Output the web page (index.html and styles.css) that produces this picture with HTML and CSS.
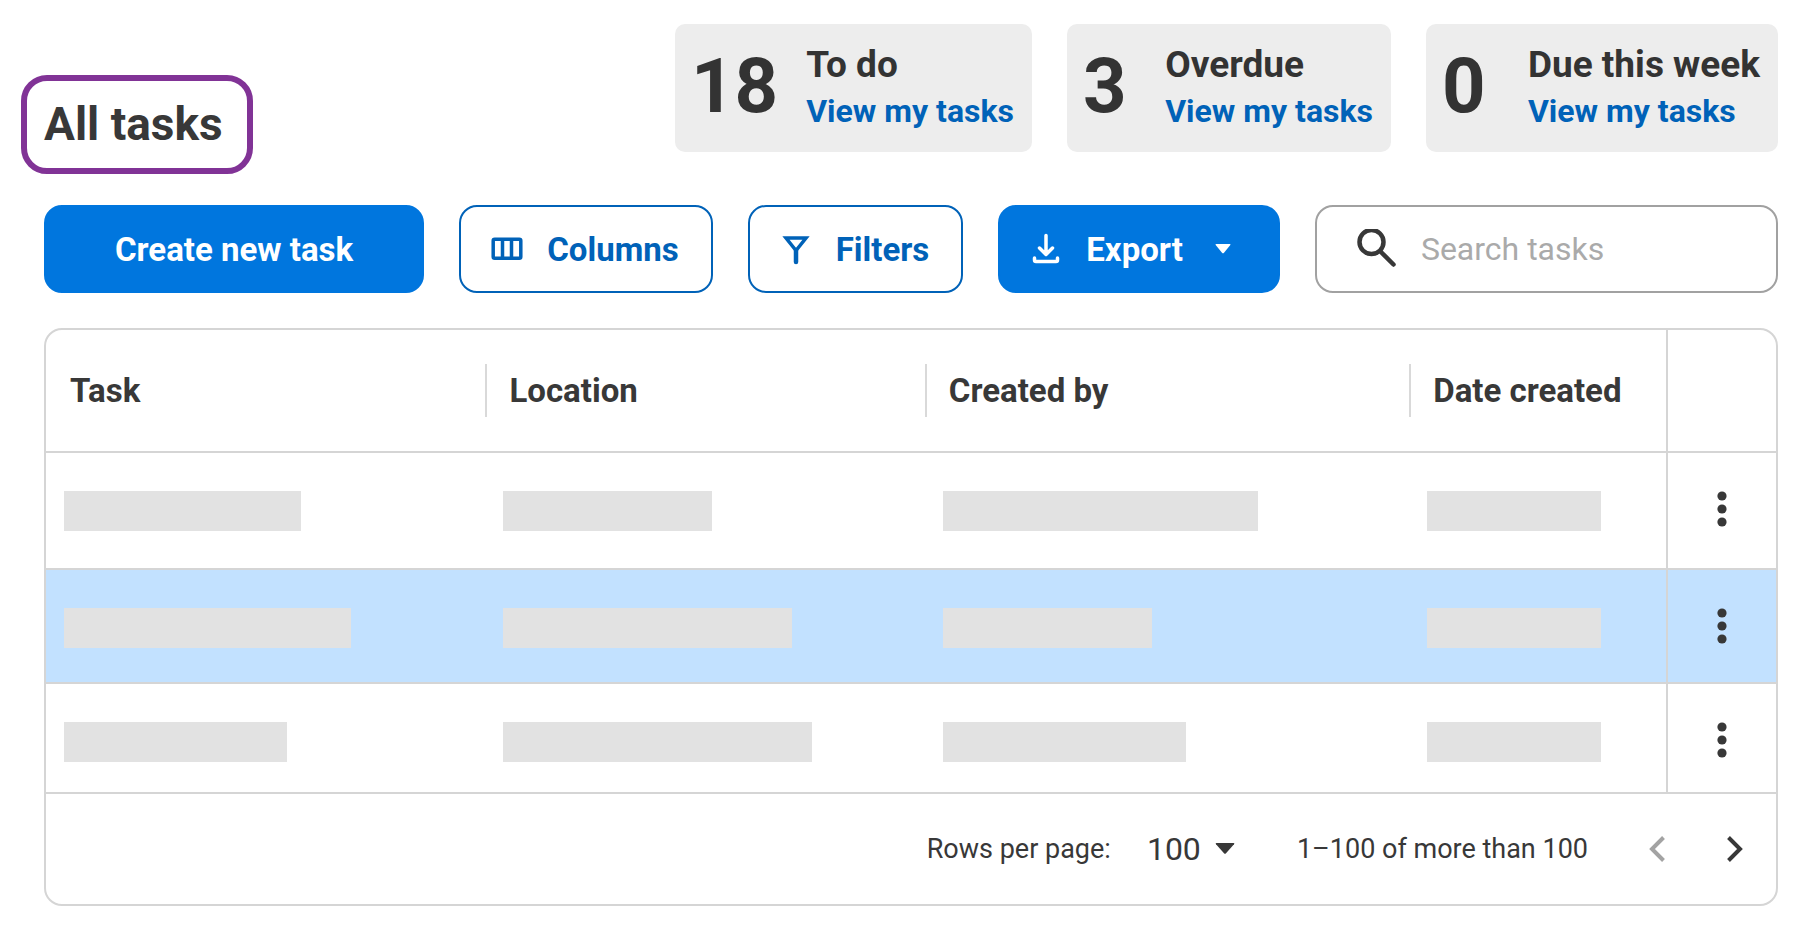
FILE: index.html
```html
<!DOCTYPE html>
<html lang="en">
<head>
    <meta charset="UTF-8">
    <meta name="viewport" content="width=device-width, initial-scale=1.0">
    <title>All tasks</title>
    <link rel="stylesheet" href="styles.css">
</head>
<body>
    <main class="page">
        <header class="page-header">
            <h1 class="page-title">All tasks</h1>

            <div class="cards">
                <div class="card">
                    <span class="card-count">18</span>
                    <div class="card-info">
                        <h2>To do</h2>
                        <a href="#">View my tasks</a>
                    </div>
                </div>
                <div class="card">
                    <span class="card-count">3</span>
                    <div class="card-info">
                        <h2>Overdue</h2>
                        <a href="#">View my tasks</a>
                    </div>
                </div>
                <div class="card">
                    <span class="card-count">0</span>
                    <div class="card-info">
                        <h2>Due this week</h2>
                        <a href="#">View my tasks</a>
                    </div>
                </div>
            </div>
        </header>

        <div class="toolbar">
            <button type="button" class="btn btn-primary btn-create">Create new task</button>
            <button type="button" class="btn btn-outline">
                <svg width="32" height="32" viewBox="0 0 32 32" fill="none" stroke="currentColor" stroke-width="3.5">
                    <rect x="2.200" y="6.200" width="27.600" height="19" rx="1.500"/>
                    <path d="M11.500 6v19.500M20.500 6v19.500"/>
                </svg>
                Columns
            </button>
            <button type="button" class="btn btn-outline">
                <svg width="32" height="32" viewBox="0 0 32 32" fill="none" stroke="currentColor" stroke-width="3.5">
                    <path d="M6 5h20L16 17.500z"/>
                    <path d="M16 17v12" stroke-width="4.500" stroke-linecap="round"/>
                </svg>
                Filters
            </button>
            <button type="button" class="btn btn-primary btn-export">
                <svg width="32" height="32" viewBox="0 0 32 32" fill="none" stroke="currentColor" stroke-width="3.5" stroke-linecap="round" stroke-linejoin="round">
                    <path d="M16 2.500v18M9.500 15l6.500 6.500 6.500-6.500M4.500 25v2q0 1.500 1.500 1.500h20q1.500 0 1.500-1.500V25"/>
                </svg>
                Export
                <svg class="caret" width="16" height="10" viewBox="0 0 16 10" fill="currentColor">
                    <path d="M1.200 0h13.600q1.200 0 .5 1L9 8.700q-1 1-2 0L.7 1Q0 0 1.200 0z"/>
                </svg>
            </button>
            <label class="search">
                <svg width="40" height="40" viewBox="0 0 40 40" fill="none" stroke="currentColor" stroke-linecap="round">
                    <circle cx="14.500" cy="13" r="12" stroke-width="4.500"/>
                    <path d="M23.500 22.500L36.500 35.500" stroke-width="4.500"/>
                </svg>
                <input type="search" placeholder="Search tasks" aria-label="Search tasks">
            </label>
        </div>

        <section class="table-box">
            <table class="tasks">
                <thead>
                    <tr>
                        <th class="col-task"><div>Task</div></th>
                        <th class="col-location"><div>Location</div></th>
                        <th class="col-author"><div>Created by</div></th>
                        <th class="col-date"><div>Date created</div></th>
                        <th class="col-menu"></th>
                    </tr>
                </thead>
                <tbody id="taskRows"></tbody>
            </table>

            <footer class="pager">
                <label for="rowsPerPage">Rows per page:</label>
                <div class="select">
                    <select id="rowsPerPage">
                        <option>100</option>
                        <option>50</option>
                        <option>25</option>
                    </select>
                    <svg width="20" height="12" viewBox="0 0 20 12" fill="currentColor">
                        <path d="M1.500 0h17q1.500 0 .5 1.200L11 10.300q-1 1-2 0L1 1.200Q0 0 1.500 0z"/>
                    </svg>
                </div>
                <span class="range">1–100 of more than 100</span>
                <button type="button" class="page-btn" aria-label="Previous page" disabled>
                    <svg width="18" height="26" viewBox="0 0 18 26" fill="none" stroke="currentColor" stroke-width="4">
                        <path d="M15.500 1.500L4 13l11.500 11.500"/>
                    </svg>
                </button>
                <button type="button" class="page-btn" aria-label="Next page">
                    <svg width="18" height="26" viewBox="0 0 18 26" fill="none" stroke="currentColor" stroke-width="4">
                        <path d="M2.500 1.500L14 13 2.500 24.500"/>
                    </svg>
                </button>
            </footer>
        </section>
    </main>

    <script>
        // Placeholder widths for each row, in column order
        const rows = [
            { bars: [237, 209, 315, 174] },
            { bars: [287, 289, 209, 174], selected: true },
            { bars: [223, 309, 243, 174] }
        ];

        const tbody = document.getElementById("taskRows");

        rows.forEach((row) => {
            const tr = document.createElement("tr");
            if (row.selected) {
                tr.className = "selected";
            }
            const cells = row.bars.map(w => `<td><div class="bar" style="width: ${w}px"></div></td>`).join("");
            tr.innerHTML = cells + `
                <td class="col-menu">
                    <button type="button" class="menu-btn" aria-label="Task actions">
                        <svg width="10" height="36" viewBox="0 0 10 36" fill="currentColor">
                            <circle cx="5" cy="5" r="4.600"/>
                            <circle cx="5" cy="18" r="4.600"/>
                            <circle cx="5" cy="31" r="4.600"/>
                        </svg>
                    </button>
                </td>`;
            tbody.appendChild(tr);
        });
    </script>
</body>
</html>
```
FILE: styles.css
```css
* {
    box-sizing: border-box;
}

body {
    font-family: Roboto, "Liberation Sans", sans-serif;
    font-size: 32px;
    background-color: #fff;
    color: #383838;
    margin: 0;
}

button, input, select {
    font: inherit;
    color: inherit;
}

svg {
    display: block;
    flex-shrink: 0;
}

.page {
    padding: 24px 30px 34px 44px;
}

/* Title and summary cards */
.page-header {
    display: flex;
    justify-content: space-between;
    align-items: flex-start;
    margin-bottom: 31px;
}

.page-title {
    margin: 51px 0 0 -23px;
    padding: 16px 24px 17px 17px;
    border: 6px solid #813396;
    border-radius: 26px;
    font-size: 46px;
    line-height: 54px;
    white-space: nowrap;
}

.cards {
    display: grid;
    grid-template-columns: 357px 324px 352px;
    gap: 35px;
}

.card {
    display: flex;
    justify-content: space-between;
    padding: 18px 18px 18px 16px;
    border-radius: 10px;
    background-color: #ededed;
    color: #333;
    white-space: nowrap;
}

.card-count {
    font-size: 76px;
    font-weight: bold;
    line-height: 88px;
}

.card-info h2 {
    margin: 0;
    font-size: 37px;
    line-height: 46px;
}

.card-info a {
    display: block;
    font-weight: bold;
    line-height: 46px;
    color: #0062b8;
    text-decoration: none;
}

/* Toolbar */
.toolbar {
    display: flex;
    gap: 35px;
    margin-bottom: 35px;
}

.btn {
    display: flex;
    align-items: center;
    justify-content: center;
    gap: 24px;
    height: 88px;
    padding: 0 32px 0 30px;
    border: 2px solid #0062b8;
    border-radius: 18px;
    font-size: 33px;
    font-weight: bold;
    white-space: nowrap;
    cursor: pointer;
}

.btn-primary {
    background-color: #0076de;
    border-color: #0076de;
    color: #fff;
}

.btn-outline {
    background-color: #fff;
    color: #0062b8;
}

.btn-create {
    padding: 0 69px;
}

.btn-export {
    padding-right: 47px;
}

.btn-export .caret {
    margin-left: 8px;
}

.search {
    display: flex;
    flex: 1;
    align-items: center;
    gap: 24px;
    min-width: 0;
    height: 88px;
    padding: 0 24px 0 40px;
    border: 2px solid #a1a1a1;
    border-radius: 18px;
}

.search input {
    flex: 1;
    min-width: 0;
    padding: 0;
    border: none;
    outline: none;
    background: none;
}

.search input::placeholder {
    color: #aaa;
    opacity: 1;
}

/* Table */
.table-box {
    border: 2px solid #d5d5d5;
    border-radius: 18px;
    overflow: hidden;
}

.tasks {
    width: 100%;
    table-layout: fixed;
    border-collapse: separate;
    border-spacing: 0;
}

.tasks th,
.tasks td {
    padding: 0;
    border-bottom: 2px solid #d5d5d5;
    text-align: left;
}

.tasks th {
    height: 123px;
    font-size: 33px;
}

.tasks th div {
    padding-left: 22px;
    border-left: 2px solid #d9d9d9;
    line-height: 53px;
    white-space: nowrap;
}

.tasks .col-task div {
    border-color: transparent;
}

.col-task,
.col-location {
    width: 25.4%;
}

.col-author {
    width: 28%;
}

.tasks .col-menu {
    width: 110px;
    border-left: 2px solid #d5d5d5;
}

.tasks td {
    height: 114px;
    padding: 38px 0 0 18px;
    vertical-align: top;
}

.tasks tbody tr:first-child td {
    height: 117px;
}

.tasks tbody tr:last-child td {
    height: 110px;
}

.tasks td.col-menu {
    padding-left: 0;
}

.selected {
    background-color: #c2e1ff;
}

.bar {
    max-width: 100%;
    height: 40px;
    background-color: #e2e2e2;
}

.menu-btn {
    display: block;
    margin: 0 auto;
    padding: 0;
    border: none;
    background: none;
    cursor: pointer;
}

/* Pagination */
.pager {
    display: flex;
    align-items: center;
    justify-content: flex-end;
    height: 110px;
    padding-right: 32px;
    font-size: 27px;
    white-space: nowrap;
}

.select {
    position: relative;
    margin: 0 62px 0 36px;
}

.select select {
    display: block;
    width: 88px;
    padding: 0;
    border: none;
    outline: none;
    background: none;
    appearance: none;
    font-size: 32px;
}

.select svg {
    position: absolute;
    top: 50%;
    right: 0;
    margin-top: -6px;
    pointer-events: none;
}

.page-btn {
    margin-left: 60px;
    padding: 0;
    border: none;
    background: none;
    cursor: pointer;
}

.page-btn:disabled {
    color: #a3a3a3;
    cursor: default;
}
```
